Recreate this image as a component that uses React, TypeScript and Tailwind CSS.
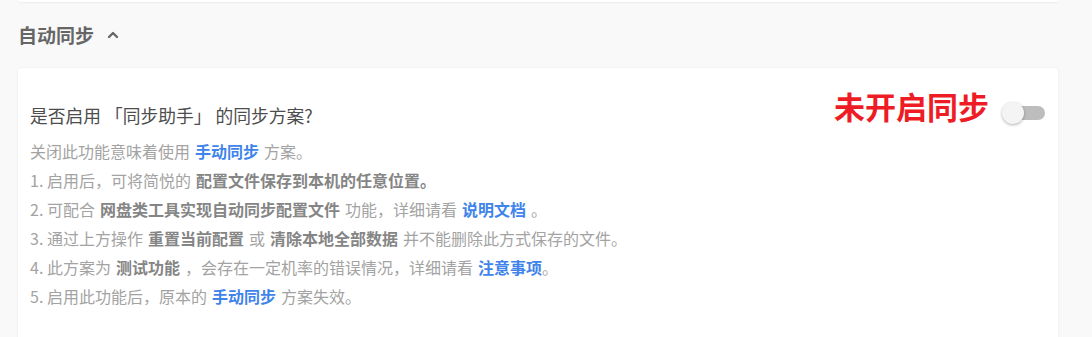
import { ChevronUp } from 'lucide-react'

const FONT = { fontFamily: '"Noto Sans CJK SC", "Noto Sans", sans-serif' }

function B({ children }: { children: React.ReactNode }) {
  return <span className="mx-[5px] font-bold text-[#858585]">{children}</span>
}

function L({ children }: { children: React.ReactNode }) {
  return <span className="mx-[5px] font-bold text-[#3f84ea]">{children}</span>
}

export default function App() {
  return (
    <div className="h-[337px] w-[1092px] overflow-hidden bg-[#f9f9f9]" style={FONT}>
      {/* tail of previous card */}
      <div className="mx-[18px] h-[2px] w-[1040px] rounded-b bg-white shadow-[0_1px_2px_rgba(0,0,0,0.06)]" />

      {/* section header */}
      <div className="flex h-[66px] items-center gap-[11px] pl-[18px]">
        <span className="text-[19px] font-bold text-[#666]">自动同步</span>
        <ChevronUp size={16} strokeWidth={3.5} className="text-[#666]" />
      </div>

      {/* card */}
      <div className="mx-[18px] w-[1040px] rounded bg-white pb-8 pl-[12px] pr-[13px] pt-[20px] shadow-[0_0_2px_rgba(0,0,0,0.08)]">
        <div className="flex items-start justify-between">
          <div className="mt-[15px] text-[17.75px] leading-[24px] text-[#4d4d4d]">
            是否启用 「同步助手」 的同步方案?
          </div>
          <div className="flex items-center gap-[14px]">
            <span className="text-[31px] font-bold leading-[36px] text-[#ee1c25]">未开启同步</span>
            <div className="relative mt-[14px] h-[14px] w-[42px] rounded-full bg-[#bdbdbd]">
              <div className="absolute left-[-1px] top-[-4px] h-[22px] w-[22px] rounded-full bg-[#f4f4f4] shadow-[0_1px_3px_rgba(0,0,0,0.3)]" />
            </div>
          </div>
        </div>

        <div className="mt-[10px] text-[16px] leading-[29px] text-[#a3a3a3]">
          <div>关闭此功能意味着使用<L>手动同步</L>方案。</div>
          <div>1. 启用后，可将简悦的<B>配置文件保存到本机的任意位置。</B></div>
          <div>2. 可配合<B>网盘类工具实现自动同步配置文件</B>功能，详细请看<L>说明文档</L>。</div>
          <div>3. 通过上方操作<B>重置当前配置</B>或<B>清除本地全部数据</B>并不能删除此方式保存的文件。</div>
          <div>4. 此方案为<B>测试功能</B>，会存在一定机率的错误情况，详细请看<span className="ml-[5px] font-bold text-[#3f84ea]">注意事项</span>。</div>
          <div>5. 启用此功能后，原本的<L>手动同步</L>方案失效。</div>
        </div>
      </div>
    </div>
  )
}
